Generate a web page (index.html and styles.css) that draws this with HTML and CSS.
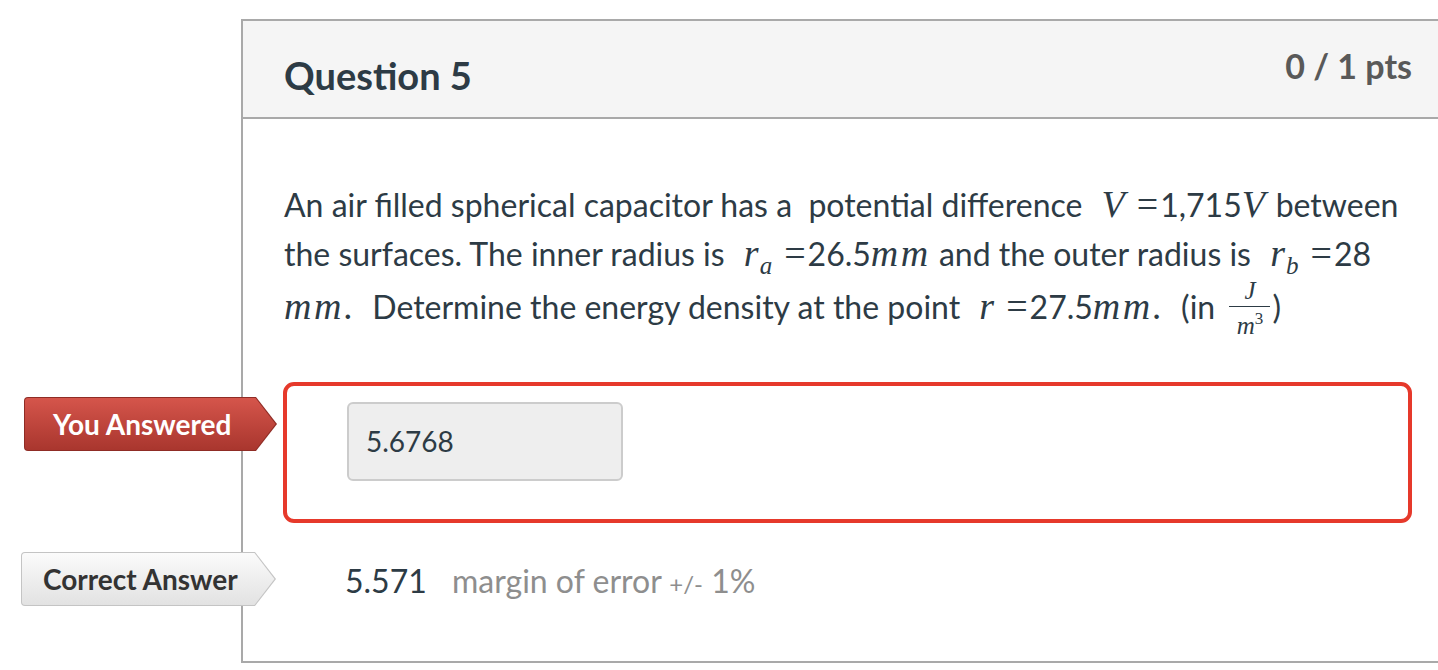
FILE: index.html
```html
<!DOCTYPE html>
<html lang="en">
<head>
<meta charset="utf-8">
<title>Question 5</title>
<link rel="stylesheet" href="styles.css">
</head>
<body>
<div class="page">
  <section class="panel">
    <header class="panel-header">
      <h2 class="title">Question 5</h2>
      <div class="pts">0 / 1 pts</div>
    </header>
    <div class="panel-body">
      <p class="question">An air filled spherical capacitor has a &nbsp;potential difference <span class="m mv">V</span><span class="eq">=</span>1,715<span class="m">V</span> between<br>the surfaces. The inner radius is <span class="m mr">r<sub>a</sub></span><span class="eq">=</span>26.5<span class="m">mm</span> and the outer radius is <span class="m mr">r<sub>b</sub></span><span class="eq">=</span>28<br><span class="m mfirst">mm.</span> &nbsp;Determine the energy density at the point <span class="m mr">r</span><span class="eq">=</span>27.5<span class="m">mm.</span> &nbsp;(in <span class="frac"><span class="num">J</span><span class="den">m<sup>3</sup></span></span>)</p>

      <div class="answer answer-wrong">
        <div class="badge badge-red"><span>You Answered</span></div>
        <div class="input-box">5.6768</div>
      </div>

      <div class="answer answer-correct">
        <div class="badge badge-gray"><span>Correct Answer</span></div>
        <span class="correct-value">5.571</span>
        <span class="margin">margin of error <span class="pm">+/-</span> 1%</span>
      </div>
    </div>
  </section>
</div>
</body>
</html>
```

FILE: styles.css
```css
html, body {
  margin: 0;
  padding: 0;
  background: #ffffff;
  overflow: hidden;
}

body {
  font-family: Lato, "Open Sans", sans-serif;
  color: #2d3b45;
}

.page {
  padding-top: 19px;
  padding-left: 241px;
}

.panel {
  box-sizing: border-box;
  width: 1215px;
  border: 2px solid #a9a9a9;
  background: #ffffff;
}

.panel-header {
  display: flex;
  justify-content: space-between;
  align-items: flex-start;
  height: 98px;
  box-sizing: border-box;
  padding: 25px 42px 0 41px;
  background: #f5f5f5;
  border-bottom: 2px solid #a9a9a9;
}

.title {
  margin: 6px 0 0 0;
  font-size: 38px;
  line-height: 46px;
  font-weight: 700;
  color: #2d3b45;
}

.pts {
  margin-top: 1px;
  font-size: 34px;
  line-height: 38px;
  font-weight: 700;
  color: #595959;
}

.panel-body {
  padding: 61px 42px 53px 41px;
}

.question {
  margin: 0;
  font-size: 32px;
  line-height: 49px;
}

.m {
  font-family: "Liberation Serif", "Times New Roman", serif;
  font-style: italic;
  font-size: 38px;
  letter-spacing: 2.5px;
  line-height: 1;
}

.mv, .mr {
  margin-left: 11px;
  margin-right: 8px;
  letter-spacing: 0;
}

.mfirst {
  margin-left: 0;
}

.m sub {
  font-size: 25px;
  vertical-align: -8px;
  line-height: 0;
  margin-left: 1px;
}

.eq {
  font-family: "Liberation Serif", "Times New Roman", serif;
  font-size: 38px;
  line-height: 1;
  margin-left: 4px;
  margin-right: 2px;
}

.frac {
  display: inline-flex;
  flex-direction: column;
  align-items: center;
  vertical-align: 20px;
  margin: 0 2px -14px 6px;
  font-family: "Liberation Serif", "Times New Roman", serif;
  font-style: italic;
  font-size: 25px;
  line-height: 1;
}

.num {
  display: block;
  padding: 0 15px 3px 15px;
  border-bottom: 1.5px solid #2d3b45;
}

.den {
  display: block;
  padding-top: 10px;
  line-height: 18px;
}

.den sup {
  font-size: 17px;
  font-style: normal;
  vertical-align: 10px;
  line-height: 0;
}

.answer {
  position: relative;
}

.answer-wrong {
  margin-top: 51px;
  margin-left: -1px;
  height: 141px;
  box-sizing: border-box;
  border: 4px solid #e6392b;
  border-radius: 11px;
  padding: 16px 0 0 60px;
}

.input-box {
  box-sizing: border-box;
  width: 276px;
  height: 79px;
  border: 2px solid #cccccc;
  border-radius: 6px;
  background: #eeeeee;
  padding-left: 17px;
  font-size: 28px;
  line-height: 75px;
  color: #2d3b45;
}

.answer-correct {
  margin-top: 33px;
  padding-left: 61px;
  font-size: 32px;
  line-height: 49px;
}

.correct-value {
  color: #2d3b45;
  margin-right: 17px;
}

.margin {
  color: #8e8e8e;
}

.pm {
  font-size: 24px;
}

.badge {
  position: absolute;
  height: 54px;
  clip-path: polygon(0 0, calc(100% - 21px) 0, 100% 50%, calc(100% - 21px) 100%, 0 100%);
  border-radius: 4px 0 0 4px;
  box-sizing: border-box;
  display: flex;
  align-items: center;
  font-size: 28px;
  font-weight: 700;
}

.badge::before {
  content: "";
  position: absolute;
  top: 1px;
  left: 1px;
  right: 1.5px;
  bottom: 1px;
  clip-path: polygon(0 0, calc(100% - 20px) 0, 100% 50%, calc(100% - 20px) 100%, 0 100%);
  border-radius: 3px 0 0 3px;
}

.badge span {
  position: relative;
}

.badge-red {
  left: -263px;
  top: 11px;
  width: 253px;
  background: #8f2c25;
  color: #ffffff;
  padding-left: 29px;
}

.badge-red::before {
  background: linear-gradient(#d5554b, #a9362e);
}

.badge-gray {
  left: -263px;
  top: -4px;
  width: 255px;
  background: #c4c4c4;
  color: #333333;
  padding-left: 22px;
}

.badge-gray::before {
  background: linear-gradient(#fbfbfb, #e2e2e2);
}
```
